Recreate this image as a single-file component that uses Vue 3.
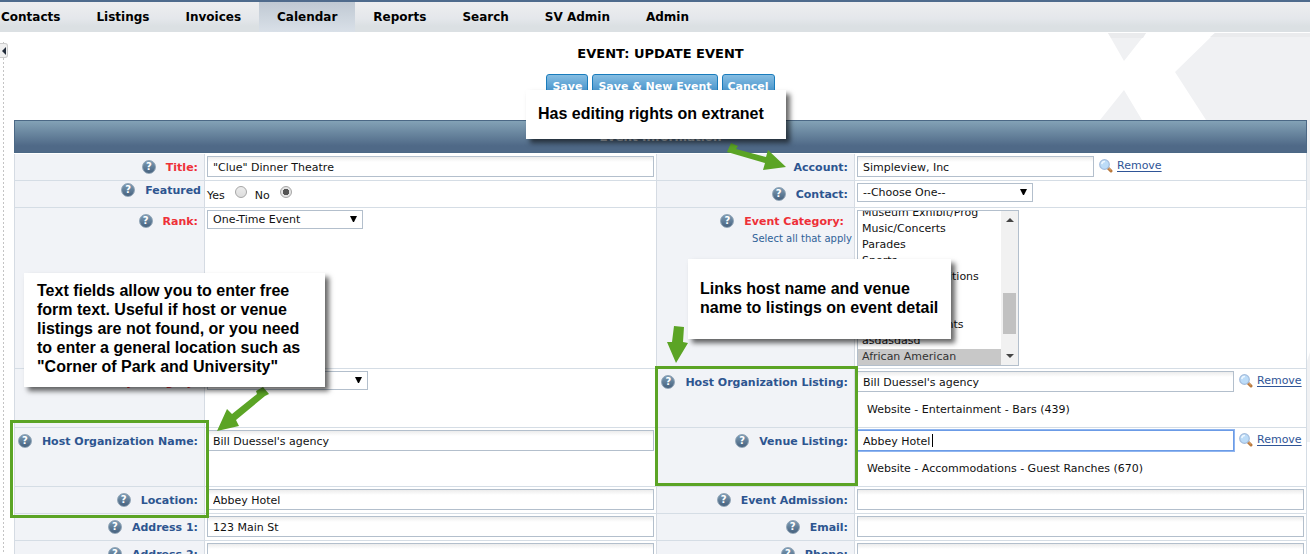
<script setup>
import { onMounted, ref } from 'vue'

const nav = ['Contacts', 'Listings', 'Invoices', 'Calendar', 'Reports', 'Search', 'SV Admin', 'Admin']
const categories = [
  'Museum Exhibit/Prog',
  'Music/Concerts',
  'Parades',
  'Sports',
  'Tours and Exhibitions',
  'Theater',
  'Tours',
  'Wine, Food Events',
  'asdasdasd',
  'African American',
]

const rows = [
  {
    left: { id: 'title', label: 'Title:', required: true, type: 'text', value: '"Clue" Dinner Theatre' },
    right: { id: 'account', label: 'Account:', noHelp: true, type: 'lookup', short: true, value: 'Simpleview, Inc' },
  },
  {
    left: { id: 'featured', label: 'Featured', tight: true, type: 'radio' },
    right: { id: 'contact', label: 'Contact:', type: 'select', size: 'wide', value: '--Choose One--' },
  },
  {
    left: { id: 'rank', label: 'Rank:', required: true, type: 'select', size: 'narrow', value: 'One-Time Event' },
    right: { id: 'category', label: 'Event Category:', required: true, hint: 'Select all that apply', type: 'list' },
  },
  {
    left: { id: 'primary', label: 'Primary Category:', required: true, noHelp: true, type: 'select', size: 'medium', value: 'African American' },
    right: { id: 'hostlisting', label: 'Host Organization Listing:', type: 'lookup', value: "Bill Duessel's agency", note: 'Website - Entertainment - Bars (439)' },
  },
  {
    left: { id: 'hostname', label: 'Host Organization Name:', type: 'text', value: "Bill Duessel's agency" },
    right: { id: 'venue', label: 'Venue Listing:', type: 'lookup', active: true, value: 'Abbey Hotel', note: 'Website - Accommodations - Guest Ranches (670)' },
  },
  {
    left: { id: 'location', label: 'Location:', type: 'text', value: 'Abbey Hotel' },
    right: { id: 'admission', label: 'Event Admission:', type: 'text', value: '' },
  },
  {
    left: { id: 'address1', label: 'Address 1:', type: 'text', value: '123 Main St' },
    right: { id: 'email', label: 'Email:', type: 'text', value: '' },
  },
  {
    left: { id: 'address2', label: 'Address 2:', type: 'text', value: '' },
    right: { id: 'phone', label: 'Phone:', type: 'text', value: '' },
  },
]

const root = ref(null)
onMounted(() => {
  root.value.querySelector('.list-select').scrollTop = 5
})
</script>

<template>
  <div ref="root" class="page">
    <nav class="nav">
      <a v-for="item in nav" :key="item" href="#" :class="{ current: item === 'Calendar' }">{{ item }}</a>
    </nav>

    <div class="body">
      <svg class="backdrop" width="210" height="410" viewBox="0 0 210 410" aria-hidden="true">
        <path fill="#f0f1f3" d="M8 1H46L24 29ZM24 58L0 88H42ZM115 1L75 40L106 88L160 168H210V1ZM180 410L210 320V410Z" />
        <path fill="#eaebed" d="M8 1H46L43 6H11ZM115 1H210V5H110Z" />
      </svg>

      <aside class="gutter">
        <button type="button" class="toggle" aria-label="Collapse panel">
          <svg width="4" height="8" viewBox="0 0 4 8"><path d="M4 0V8L0 4Z" fill="#222c3a" /></svg>
        </button>
      </aside>

      <main class="main">
        <h1>EVENT: UPDATE EVENT</h1>
        <div class="actions">
          <button type="button">Save</button>
          <button type="button">Save &amp; New Event</button>
          <button type="button">Cancel</button>
        </div>

        <form class="form" @submit.prevent>
          <h2>Event Information</h2>
          <div v-for="row in rows" :key="row.left.id" class="row">
            <template v-for="f in [row.left, row.right]" :key="f.id">
              <div class="label" :class="{ required: f.required, tight: f.tight, hinted: f.hint }">
                <div class="label-line">
                  <span v-if="!f.noHelp" class="help" aria-hidden="true">?</span>
                  <label :for="f.id">{{ f.label }}</label>
                </div>
                <small v-if="f.hint">{{ f.hint }}</small>
              </div>

              <div class="field">
                <input v-if="f.type === 'text'" :id="f.id" type="text" :value="f.value" />

                <div v-else-if="f.type === 'radio'" class="radios">
                  <label for="featured">Yes</label>
                  <input id="featured" type="radio" name="featured" />
                  <label for="featured-no">No</label>
                  <input id="featured-no" type="radio" name="featured" checked />
                </div>

                <div v-else-if="f.type === 'select'" class="drop" :class="f.size">
                  <select :id="f.id"><option>{{ f.value }}</option></select>
                  <svg width="7" height="6" viewBox="0 0 7 6"><path d="M0 0H7L4 6H3Z" /></svg>
                </div>

                <div v-else-if="f.type === 'list'" class="list">
                  <select :id="f.id" class="list-select" multiple>
                    <option v-for="c in categories" :key="c" :selected="c === 'African American'">{{ c }}</option>
                  </select>
                  <div class="bar">
                    <svg width="8" height="4" viewBox="0 0 8 4"><path d="M4 0L8 4H0Z" fill="#444" /></svg>
                    <span class="thumb"></span>
                    <svg width="8" height="4" viewBox="0 0 8 4"><path d="M4 4L8 0H0Z" fill="#444" /></svg>
                  </div>
                </div>

                <template v-else>
                  <div class="lookup" :class="{ short: f.short }">
                    <span class="box">
                      <input :id="f.id" type="text" :value="f.value" :class="{ active: f.active }" />
                      <i v-if="f.active" class="caret"></i>
                    </span>
                    <svg class="lens" width="14" height="14" viewBox="0 0 14 14" aria-hidden="true">
                      <path d="M8.5 8.5L12 12" stroke="#b9783c" stroke-width="3" stroke-linecap="round" />
                      <path d="M9.2 8.6L11.8 11.2" stroke="#e5b27c" stroke-width="1" />
                      <circle cx="5.5" cy="5.5" r="4.8" fill="#bcdcf8" stroke="#a3bcdc" stroke-width="1.2" />
                      <path d="M2.8 5.2A3 3 0 0 1 6 2.6" stroke="#eef7ff" stroke-width="1.5" fill="none" />
                    </svg>
                    <a href="#">Remove</a>
                  </div>
                  <p v-if="f.note">{{ f.note }}</p>
                </template>
              </div>
            </template>
          </div>
        </form>
      </main>
    </div>

    <div class="frame frame-left"></div>
    <div class="frame frame-right"></div>
    <svg class="arrows" width="800" height="440" viewBox="0 0 800 440" aria-hidden="true">
      <g fill="#5ba425">
        <path d="M731 143L738 146L736 149L766 157L768 150L786 167L763 170L765 163L734 154L727 152Z" />
        <path d="M263 387L269 394L265 396L236 420L239 426L217 431L227 409L232 414L257 394L256 391Z" />
        <path d="M674 326L684 327L683 342L688 343L676 363L667 342L672 342Z" />
      </g>
    </svg>
    <div class="callout rights">Has editing rights on extranet</div>
    <div class="callout text-fields">Text fields allow you to enter free<br />form text. Useful if host or venue<br />listings are not found, or you need<br />to enter a general location such as<br />"Corner of Park and University"</div>
    <div class="callout links">Links host name and venue<br />name to listings on event detail</div>
  </div>
</template>

<style>
body {
  margin: 0;
  background: #fff;
}
</style>

<style scoped>
* {
  box-sizing: border-box;
}
.page {
  position: relative;
  height: 100vh;
  overflow: hidden;
  font: 11px/14px Verdana, "DejaVu Sans", sans-serif;
  color: #111;
}
.nav {
  display: flex;
  height: 32px;
  border-top: 2px solid #4f6b8c;
  background: linear-gradient(#eeeeef, #e4e7eb 55%, #dbe0e3 80%, #dbe0e3);
}
.nav a {
  padding: 0 18px;
  font-size: 12px;
  font-weight: bold;
  line-height: 30px;
  color: #000;
  text-decoration: none;
}
.nav a:first-child {
  padding-left: 1px;
}
.nav a.current {
  background: linear-gradient(#c0c9d3, #d9e0e8);
}
.body {
  position: relative;
  display: flex;
}
.backdrop {
  position: absolute;
  top: 0;
  right: 0;
}
.gutter {
  position: relative;
  width: 14px;
  flex: none;
}
.gutter::before {
  content: "";
  position: absolute;
  top: 10px;
  bottom: 0;
  left: 3px;
  width: 1px;
  background: repeating-linear-gradient(#c4c4c4 0 2px, #fff 2px 4px);
}
.toggle {
  position: relative;
  display: flex;
  align-items: center;
  justify-content: center;
  width: 8px;
  height: 15px;
  margin-top: 11px;
  padding: 0;
  border: 1px solid #ccc;
  border-left: 0;
  border-radius: 0 3px 3px 0;
  background: #efefef;
}
.main {
  position: relative;
  flex: 1;
  margin-right: 3px;
}
h1 {
  margin: 14px 0 12px;
  font-size: 13px;
  line-height: 16px;
  text-align: center;
  color: #000;
}
.actions {
  display: flex;
  justify-content: center;
  gap: 4px;
  margin-bottom: 22px;
}
.actions button {
  height: 24px;
  padding: 1px 5px 0;
  border: 1px solid #1a7cbc;
  border-radius: 3px;
  background: linear-gradient(#86bde2, #3387c4);
  font: bold 11px/22px Verdana, "DejaVu Sans", sans-serif;
  color: #fff;
}
.form {
  background: #fff;
  border-right: 1px solid #d5dde5;
}
h2 {
  height: 33px;
  margin: 0 -1px 1px 0;
  border: 1px solid #4b6885;
  background: linear-gradient(#83a2b6, #4f6987 80%, #4f6987);
  font-size: 12px;
  line-height: 33px;
  text-align: center;
  color: #cfd8e0;
}
.row {
  display: grid;
  grid-template-columns: 190px 1fr 198px 1fr;
  min-height: 27px;
}
.label,
.field {
  border-left: 1px solid #d5dbe3;
  border-bottom: 1px solid #d5dde5;
  min-width: 0;
}
.label {
  padding: 6px 6px 0 2px;
  background: #f1f3f7;
  text-align: right;
  color: #2d5590;
}
.label-line {
  display: flex;
  justify-content: flex-end;
  gap: 10px;
  font-weight: bold;
  line-height: 16px;
  white-space: nowrap;
}
.label.required label {
  color: #ee3038;
}
.label.tight {
  padding: 2px 3px 0;
}
.label.hinted .label-line {
  padding-right: 4px;
}
.label small {
  display: block;
  margin: 2px -4px 0 0;
  font-size: 10px;
  line-height: 14px;
  color: #2f6297;
}
.help {
  width: 14px;
  height: 14px;
  border: 1px solid #8fa3b5;
  border-radius: 50%;
  background: linear-gradient(#7d9cb4, #46617e);
  font: bold 10px/12px "DejaVu Sans", sans-serif;
  text-align: center;
  color: #fff;
}
.field {
  padding: 2px;
}
input[type="text"] {
  display: block;
  width: 100%;
  height: 21px;
  padding: 1px 5px 0;
  border: 1px solid #b3bfcc;
  border-radius: 0;
  background: linear-gradient(#ececec, #fff 5px);
  font: 11px/14px Verdana, "DejaVu Sans", sans-serif;
  color: #111;
  outline: 0;
}
input.active {
  border-color: #6b9be6;
  background: #fff;
  box-shadow: 0 0 0 1px #8fb5f0;
}
.radios {
  display: flex;
  align-items: flex-end;
  height: 20px;
}
.radios label {
  line-height: 14px;
  padding-right: 10px;
}
.radios input {
  appearance: none;
  width: 12px;
  height: 12px;
  margin: 0 8px 5px 0;
  border: 1px solid #a6a6a6;
  border-radius: 50%;
  background: linear-gradient(#ececec, #ddd);
}
.radios input:checked {
  background: radial-gradient(circle, #555 0 3px, #e4e4e4 3px);
}
.drop {
  position: relative;
}
.drop.narrow {
  width: 156px;
}
.drop.medium {
  width: 161px;
}
.drop.wide {
  width: 176px;
}
.drop select {
  appearance: none;
  display: block;
  width: 100%;
  height: 19px;
  padding: 0 5px;
  border: 1px solid #b3bfcc;
  border-radius: 0;
  background: #fff;
  font: 11px/17px Verdana, "DejaVu Sans", sans-serif;
  color: #111;
}
.drop svg {
  position: absolute;
  top: 6px;
  right: 6px;
}
.list {
  display: flex;
  width: 162px;
  height: 156px;
  border: 1px solid #b3bfcc;
}
.list-select {
  flex: 1;
  min-width: 0;
  height: 154px;
  padding: 0;
  border: 0;
  border-radius: 0;
  outline: 0;
  background: #fff;
  font: 11px/14px Verdana, "DejaVu Sans", sans-serif;
  color: #111;
  overflow: auto;
  scrollbar-width: none;
}
.list-select option {
  height: 16px;
  min-height: 16px;
  padding: 1px 4px;
  line-height: 14px;
}
.list-select option:checked {
  background: #c8c8c8 linear-gradient(#c8c8c8, #c8c8c8);
  color: #333;
}
.bar {
  display: flex;
  flex-direction: column;
  align-items: center;
  width: 17px;
  padding: 7px 0;
  background: #f1f1f1;
}
.thumb {
  width: 13px;
  height: 41px;
  margin: auto 0 20px;
  background: #c1c1c1;
}
.lookup {
  display: flex;
}
.box {
  position: relative;
  flex: 1;
}
.short .box {
  flex: none;
  width: 237px;
}
.caret {
  position: absolute;
  top: 4px;
  left: 75px;
  width: 1px;
  height: 13px;
  background: #000;
}
.lens {
  margin: 3px 4px 0 5px;
}
.lookup a {
  min-width: 47px;
  color: #2f5597;
  line-height: 20px;
  text-underline-offset: 2px;
}
p {
  margin: 10px 0 8px 10px;
  line-height: 15px;
}
.frame {
  position: absolute;
  border: 3px solid #5ba425;
}
.frame-left {
  top: 420px;
  left: 10px;
  width: 199px;
  height: 98px;
}
.frame-right {
  top: 366px;
  left: 655px;
  width: 203px;
  height: 120px;
}
.arrows {
  position: absolute;
  top: 0;
  left: 0;
}
.callout {
  position: absolute;
  background: #fff;
  box-shadow: 4px 4px 5px rgba(0, 0, 0, 0.6);
  font: bold 16px/19px Arial, "Liberation Sans", sans-serif;
  color: #000;
  white-space: nowrap;
}
.rights {
  top: 90px;
  left: 526px;
  width: 260px;
  padding: 14px 12px 16px;
}
.text-fields {
  top: 273px;
  left: 24px;
  width: 301px;
  padding: 8px 13px 11px;
}
.links {
  top: 259px;
  left: 688px;
  width: 263px;
  padding: 20px 12px 22px;
}
</style>
